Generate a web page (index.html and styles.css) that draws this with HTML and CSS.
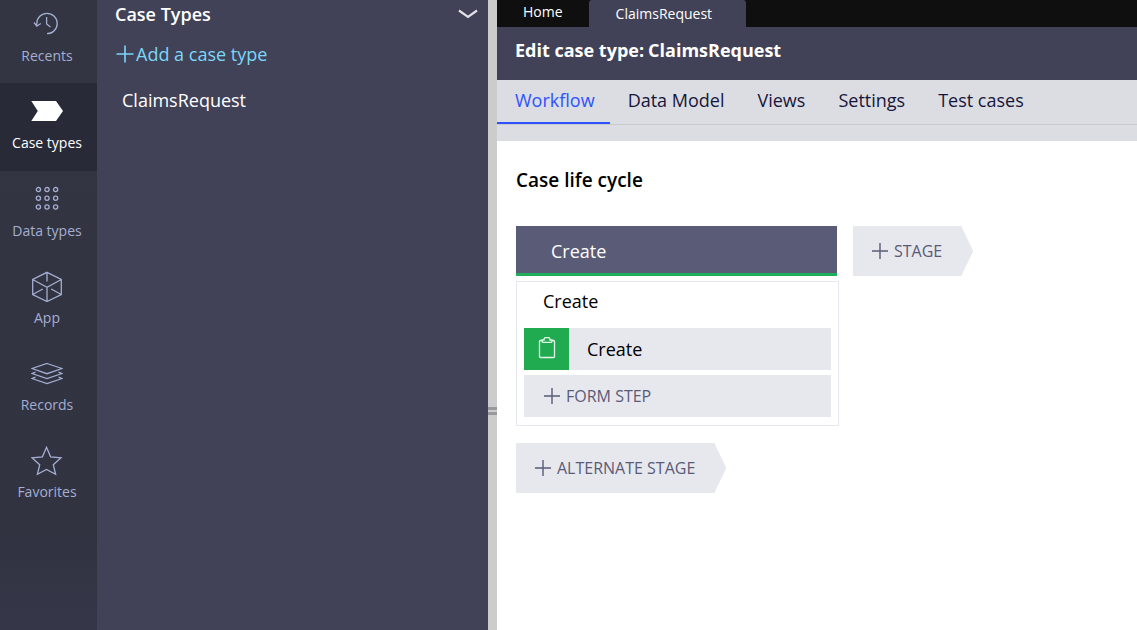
FILE: index.html
```html
<!DOCTYPE html>
<html lang="en">
<head>
<meta charset="utf-8">
<meta name="viewport" content="width=device-width, initial-scale=1">
<title>Edit case type: ClaimsRequest</title>
<link rel="stylesheet" href="styles.css">
</head>
<body>
<div class="app">
  <nav class="rail" aria-label="Main">
    <ul class="rail-list">
      <li><a class="rail-item" href="#recents">
        <svg class="rail-icon" viewBox="0 0 32 32"><path d="M5.8 17V15.5A10.2 10.2 0 1 1 16 25.7M3 14.5L5.8 18.2L9.8 15.5M15.6 9V16L19.5 19"/></svg>
        <span>Recents</span></a></li>
      <li><a class="rail-item rail-item-active" href="#case-types" aria-current="page">
        <svg class="rail-icon rail-icon-solid" viewBox="0 0 32 32"><path d="M0.3 6H25L32 16L25 26H0.3L6.8 16Z"/></svg>
        <span>Case types</span></a></li>
      <li><a class="rail-item" href="#data-types">
        <svg class="rail-icon" viewBox="0 0 32 32"><g><circle cx="7.4" cy="6.6" r="2.1"/><circle cx="16" cy="6.6" r="2.1"/><circle cx="24.6" cy="6.6" r="2.1"/><circle cx="7.4" cy="15.3" r="2.1"/><circle cx="16" cy="15.3" r="2.1"/><circle cx="24.6" cy="15.3" r="2.1"/><circle cx="7.4" cy="24" r="2.1"/><circle cx="16" cy="24" r="2.1"/><circle cx="24.6" cy="24" r="2.1"/></g></svg>
        <span>Data types</span></a></li>
      <li><a class="rail-item" href="#app">
        <svg class="rail-icon" viewBox="0 0 32 32"><path d="M16 2.3L30.3 9.5V24.5L16 31.5L1.7 24.5V9.5ZM1.7 9.5L16 17.3L30.3 9.5M16 17.3V31.5M16 2.3V11.5M1.7 24.5L11.8 19M30.3 24.5L20.2 19"/></svg>
        <span>App</span></a></li>
      <li><a class="rail-item" href="#records">
        <svg class="rail-icon" viewBox="0 0 32 32"><path d="M16 6.5L31 11.5L16 16.7L1 11.5ZM4.5 15.2L1 16.5L16 21.6L31 16.5L27.5 15.2M4.5 20.2L1 21.5L16 26.5L31 21.5L27.5 20.2"/></svg>
        <span>Records</span></a></li>
      <li><a class="rail-item" href="#favorites">
        <svg class="rail-icon" viewBox="0 0 32 32"><path d="M15.5 3.3L19.6 12.8L30 13.8L22.3 20.7L24.6 30.3L15.5 25.4L6.4 30.3L8.7 20.7L1 13.8L11.4 12.8Z"/></svg>
        <span>Favorites</span></a></li>
    </ul>
  </nav>

  <aside class="explorer">
    <div class="explorer-head">
      <h2 class="explorer-title">Case Types</h2>
      <button class="collapse" type="button" aria-label="Case types menu">
        <svg width="20" height="10" viewBox="0 0 20 10"><path d="M1 1.5L10 8L19 1.5"/></svg>
      </button>
    </div>
    <button class="add-case" type="button">
      <svg class="plus" width="18" height="18" viewBox="0 0 18 18"><path d="M0.5 9H17.5M9 0.5V17.5"/></svg>Add a case type
    </button>
    <a class="case-link" href="#claims">ClaimsRequest</a>
  </aside>

  <div class="splitter" role="separator" aria-orientation="vertical"><span class="grip"></span></div>

  <main class="main">
    <nav class="docs" aria-label="Open documents">
      <a class="doc" href="#home">Home</a>
      <a class="doc doc-active" href="#claims">ClaimsRequest</a>
    </nav>
    <header class="title-bar">
      <h1 class="title"><span>Edit case type:</span><span>ClaimsRequest</span></h1>
    </header>
    <nav class="tabs" aria-label="Case type">
      <a class="tab tab-active" href="#workflow">Workflow</a>
      <a class="tab" href="#model">Data Model</a>
      <a class="tab" href="#views">Views</a>
      <a class="tab" href="#settings">Settings</a>
      <a class="tab" href="#tests">Test cases</a>
    </nav>
    <section class="content">
      <h2 class="heading">Case life cycle</h2>
      <div class="stages">
        <div class="stage">
          <h3 class="stage-name">Create</h3>
          <div class="process">
            <h4 class="process-name">Create</h4>
            <div class="step">
              <span class="step-icon"><svg width="18" height="22" viewBox="0 0 18 22"><path d="M4 3.5H2.5Q1.5 3.5 1.5 4.5V19.5Q1.5 20.5 2.5 20.5H15.5Q16.5 20.5 16.5 19.5V4.5Q16.5 3.5 15.5 3.5H14M4 3H6Q6 0.7 7.5 0.7H10.5Q12 0.7 12 3H14V4.5Q14 5.3 13 5.3H5Q4 5.3 4 4.5Z"/></svg></span>
              <span>Create</span>
            </div>
            <button class="add-step" type="button">
              <svg class="plus" width="16" height="16" viewBox="0 0 16 16"><path d="M0 8H16M8 0V16"/></svg>FORM STEP
            </button>
          </div>
        </div>
        <button class="add-stage" type="button">
          <svg class="plus" width="16" height="16" viewBox="0 0 16 16"><path d="M0 8H16M8 0V16"/></svg>STAGE
        </button>
      </div>
      <button class="add-stage" type="button">
        <svg class="plus" width="16" height="16" viewBox="0 0 16 16"><path d="M0 8H16M8 0V16"/></svg>ALTERNATE STAGE
      </button>
    </section>
  </main>
</div>
</body>
</html>
```

FILE: styles.css
```css
* { box-sizing: border-box; }

body {
  margin: 0;
  font-family: "Open Sans", "Noto Sans", sans-serif;
  font-size: 18px;
  line-height: 24px;
  color: #000;
  background: #fff;
}

h1, h2, h3, h4, ul { margin: 0; padding: 0; font-size: 18px; }
a { color: inherit; text-decoration: none; }
button { border: 0; padding: 0; background: none; font: inherit; color: inherit; cursor: pointer; }
svg { display: block; flex: none; fill: none; stroke: currentColor; }

.app { display: flex; min-height: 100vh; overflow: hidden; }

.rail {
  flex: 0 0 97px;
  background: linear-gradient(#343543, #323341 85%, #353648);
  color: #a3aed1;
}
.rail-list { list-style: none; margin-top: -4px; font-size: 14px; }
.rail-item {
  display: flex;
  flex-direction: column;
  align-items: center;
  gap: 4px;
  padding: 12px 3px 15px 0;
}
.rail-item-active { padding-bottom: 16px; background: #292a37; color: #fff; }
.rail-icon { width: 32px; height: 32px; stroke-width: 1.3; }
.rail-icon-solid { fill: currentColor; stroke: none; }

.explorer {
  flex: 0 0 391px;
  display: flex;
  flex-direction: column;
  align-items: flex-start;
  background: #414257;
  color: #fff;
}
.explorer-head {
  align-self: stretch;
  display: flex;
  align-items: center;
  justify-content: space-between;
  padding: 2px 10px 0 18px;
}
.explorer-title { font-weight: 600; }
.collapse { color: #e1e1e6; }
.collapse svg { stroke-width: 2.2; }
.add-case {
  display: flex;
  align-items: center;
  gap: 2px;
  margin: 16px 0 22px 19px;
  color: #7bd7f8;
}
.add-case .plus { stroke-width: 1.6; }
.case-link { margin-left: 25px; }

.splitter {
  flex: 0 0 9px;
  display: flex;
  flex-direction: column;
  background: #ccc;
}
.grip {
  height: 8px;
  margin-top: 407px;
  border: solid #98989d;
  border-width: 3px 0;
}

.main { flex: 1; min-width: 0; }
.docs { display: flex; height: 27px; background: #0f0f0f; color: #fff; font-size: 14px; }
.doc { padding: 0 26px; }
.doc-active { padding: 2px 34px 0 27px; background: #414257; border-radius: 3px 3px 0 0; }
.title-bar { padding: 11px 18px 18px; background: #414257; color: #fff; }
.title { display: flex; gap: 4px; font-weight: 700; }

.tabs {
  display: flex;
  height: 61px;
  background: linear-gradient(#c9cacd, #c9cacd) 0 44px / 100% 1px no-repeat #dcdde2;
  color: #16163a;
}
.tab { height: 44px; padding: 8px 15px 0 18px; }
.tab-active { color: #2d52ff; border-bottom: 2px solid #2d52ff; }

.content { padding: 27px 19px; }
.heading { font-size: 19px; font-weight: 600; }
.stages { display: flex; align-items: flex-start; gap: 14px; margin: 34px 0 17px; }
.stage { width: 323px; }
.stage-name {
  margin-right: 2px;
  padding: 13px 35px 10px;
  background: #5a5b76;
  border-bottom: 3px solid #1fad5c;
  color: #fff;
  font-weight: 400;
}
.process {
  display: flex;
  flex-direction: column;
  gap: 5px;
  margin-top: 5px;
  padding: 7px 7px 8px;
  border: 1px solid #e7e8ee;
}
.process-name { padding: 0 19px 10px; font-weight: 400; }
.step { display: flex; align-items: center; gap: 18px; height: 42px; background: #e7e8ee; }
.step-icon {
  display: grid;
  justify-content: center;
  align-self: stretch;
  width: 45px;
  padding-top: 9px;
  background: #20ab50;
  color: #e4f8ea;
}
.step-icon svg { stroke-width: 1.3; }
.add-step, .add-stage {
  display: flex;
  align-items: center;
  gap: 6px;
  background: #e7e8ee;
  color: #5a5b76;
  font-size: 16px;
}
.add-step { height: 42px; padding-left: 20px; }
.add-stage {
  height: 50px;
  padding: 0 31px 0 19px;
  clip-path: polygon(0 0, calc(100% - 12px) 0, 100% 50%, calc(100% - 12px) 100%, 0 100%);
}
.add-step .plus, .add-stage .plus { stroke-width: 1.4; }
```
